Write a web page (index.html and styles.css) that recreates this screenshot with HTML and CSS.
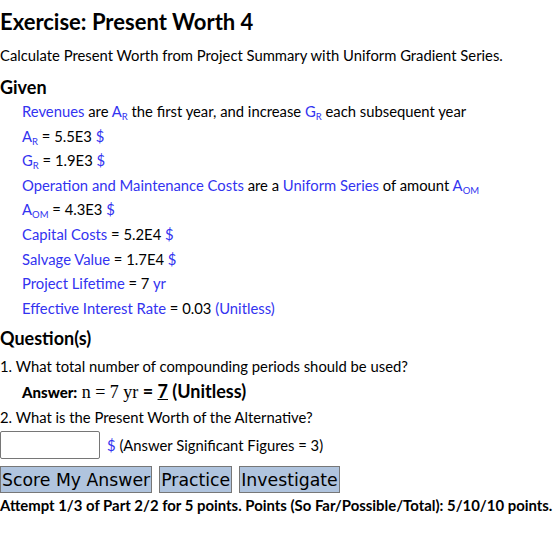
FILE: index.html
```html
<!DOCTYPE html>
<html>
<head>
<meta charset="utf-8">
<link rel="stylesheet" href="styles.css">
</head>
<body>
<h1 class="title">Exercise: Present Worth 4</h1>
<p class="desc">Calculate Present Worth from Project Summary with Uniform Gradient Series.</p>
<h2 class="section">Given</h2>
<div class="given">
  <div class="line"><span class="v">Revenues</span> are <span class="v">A<sub>R</sub></span> the first year, and increase <span class="v">G<sub>R</sub></span> each subsequent year</div>
  <div class="line"><span class="v">A<sub>R</sub></span> = 5.5E3 <span class="v">$</span></div>
  <div class="line"><span class="v">G<sub>R</sub></span> = 1.9E3 <span class="v">$</span></div>
  <div class="line"><span class="v">Operation and Maintenance Costs</span> are a <span class="v">Uniform Series</span> of amount <span class="v">A<sub>OM</sub></span></div>
  <div class="line"><span class="v">A<sub>OM</sub></span> = 4.3E3 <span class="v">$</span></div>
  <div class="line"><span class="v">Capital Costs</span> = 5.2E4 <span class="v">$</span></div>
  <div class="line"><span class="v">Salvage Value</span> = 1.7E4 <span class="v">$</span></div>
  <div class="line"><span class="v">Project Lifetime</span> = 7 <span class="v">yr</span></div>
  <div class="line"><span class="v">Effective Interest Rate</span> = 0.03 <span class="v">(Unitless)</span></div>
</div>
<h2 class="section q">Question(s)</h2>
<div class="qline first">1. What total number of compounding periods should be used?</div>
<div class="answer"><b class="lbl">Answer:</b> <span class="math">n = 7 yr</span> = <span class="u">7</span> (Unitless)</div>
<div class="qline">2. What is the Present Worth of the Alternative?</div>
<div class="inputrow"><input class="box" type="text"><span class="unit"><span class="v">$</span> (Answer Significant Figures = 3)</span></div>
<div class="buttons"><button class="btn">Score My Answer</button><button class="btn">Practice</button><button class="btn">Investigate</button></div>
<div class="attempt">Attempt 1/3 of Part 2/2 for 5 points. Points (So Far/Possible/Total): 5/10/10 points.</div>
</body>
</html>
```
FILE: styles.css
```css
html, body { margin: 0; padding: 0; background: #fff; }
body {
  font-family: Lato, "Open Sans", sans-serif;
  font-size: 14.8px;
  color: #000;
}
.title {
  font-size: 22px;
  font-weight: bold;
  margin: 8px 0 0 0;
  line-height: 28px;
}
.desc { margin: 8px 0 0 0; line-height: 22px; }
.section {
  font-size: 18px;
  font-weight: bold;
  margin: 9px 0 0 0;
  line-height: 24px;
}
.given { padding-left: 22px; }
.line { line-height: 24.6px; }
.v { color: #3333f0; }
sub { font-size: 9.5px; vertical-align: -3px; line-height: 0; }
.q { margin-top: 6px; }
.qline { line-height: 25px; }
.qline.first { margin-top: 4px; }
.answer {
  padding-left: 22px;
  font-weight: bold;
  font-size: 18px;
  line-height: 25px;
}
.lbl { font-size: 15px; }
.math { font-family: "Liberation Serif", "DejaVu Serif", serif; font-weight: normal; font-size: 18px; }
.u { text-decoration: underline; }
.inputrow { display: flex; align-items: center; margin-top: 1px; }
.box {
  width: 100px; height: 28px; box-sizing: border-box;
  border: 1px solid #767676; border-radius: 2px; margin: 0; padding: 0;
}
.unit { margin-left: 7px; }
.buttons { display: flex; gap: 7px; margin-top: 7px; }
.btn {
  font-family: "DejaVu Sans", Verdana, sans-serif;
  font-size: 17.3px;
  background: #b0c4de;
  border: 1px solid #777;
  padding: 0 1px;
  margin: 0;
  height: 27px;
  line-height: 24px;
  color: #000;
}
.attempt { font-weight: bold; font-size: 14.9px; margin-top: 2px; line-height: 20px; }
```
